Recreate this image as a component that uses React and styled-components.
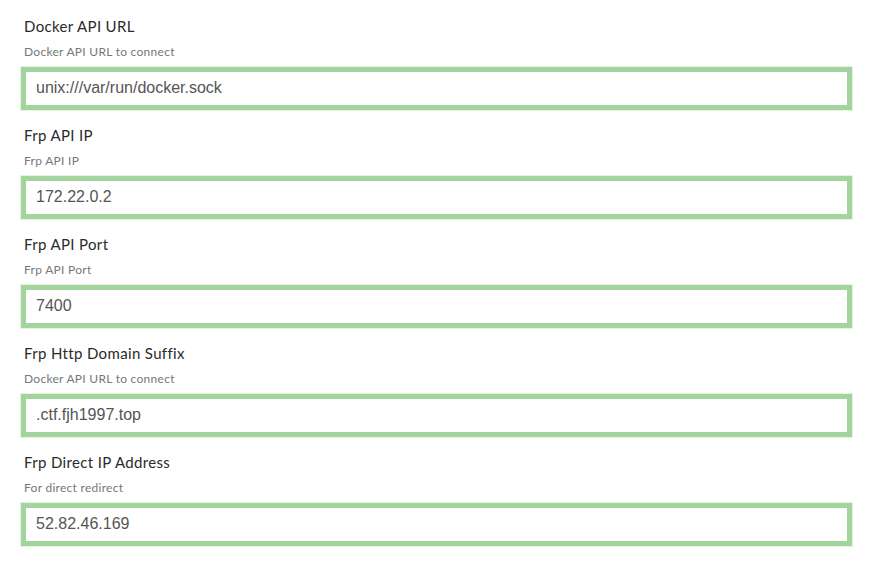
import styled, { createGlobalStyle } from "styled-components";

const GlobalStyle = createGlobalStyle`
  body {
    margin: 0;
    background: #fff;
    font-family: Lato, "Noto Sans", sans-serif;
  }
`;

const Form = styled.form`
  padding: 16px 22px 0 20px;
`;

const Field = styled.div`
  margin-bottom: 14px;
`;

const Label = styled.label`
  display: block;
  margin-left: 4px;
  font-size: 15px;
  line-height: 20px;
  letter-spacing: 0.35px;
  color: #2a2a2a;
`;

const Help = styled.div`
  margin: 8px 0 6px 4px;
  font-size: 12px;
  line-height: 16px;
  letter-spacing: 0.28px;
  color: #777;
`;

const Input = styled.input`
  display: block;
  box-sizing: border-box;
  width: 100%;
  height: 45px;
  margin: 0;
  padding: 0 10px 1px 15px;
  border: 1px solid #e6f3e3;
  box-shadow: inset 0 0 0 5px #a4d49d;
  border-radius: 0;
  outline: none;
  background: #fff;
  font-family: "Liberation Sans", Arial, sans-serif;
  font-size: 16px;
  color: #555;
`;

const fields = [
  { label: "Docker API URL", help: "Docker API URL to connect", value: "unix:///var/run/docker.sock" },
  { label: "Frp API IP", help: "Frp API IP", value: "172.22.0.2" },
  { label: "Frp API Port", help: "Frp API Port", value: "7400" },
  { label: "Frp Http Domain Suffix", help: "Docker API URL to connect", value: ".ctf.fjh1997.top" },
  { label: "Frp Direct IP Address", help: "For direct redirect", value: "52.82.46.169" },
];

export default function App() {
  return (
    <>
      <GlobalStyle />
      <Form>
        {fields.map((f, i) => (
          <Field key={i}>
            <Label htmlFor={`f${i}`}>{f.label}</Label>
            <Help>{f.help}</Help>
            <Input id={`f${i}`} type="text" defaultValue={f.value} />
          </Field>
        ))}
      </Form>
    </>
  );
}
